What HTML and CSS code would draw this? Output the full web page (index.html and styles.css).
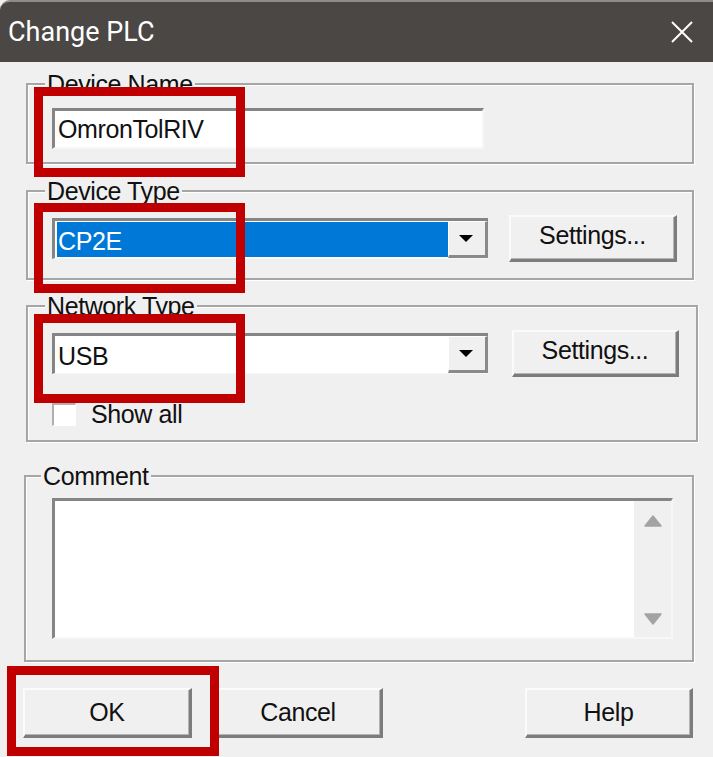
FILE: index.html
```html
<!DOCTYPE html>
<html>
<head>
<meta charset="utf-8">
<title>Change PLC</title>
<link rel="stylesheet" href="styles.css">
</head>
<body>
<div class="window">
  <div class="titlebar">
    <span class="title">Change PLC</span>
    <svg class="close" width="24" height="24" viewBox="0 0 24 24"><path d="M2 2 L22 22 M22 2 L2 22" stroke="#ffffff" stroke-width="2" fill="none"/></svg>
  </div>
  <div class="client">
    <div class="group g-name">
      <span class="legend">Device Name</span>
      <div class="edit name-edit"><span class="txt">OmronTolRIV</span></div>
    </div>

    <div class="group g-type">
      <span class="legend">Device Type</span>
      <div class="row">
        <div class="combo">
          <div class="combo-text selected">CP2E</div>
          <div class="drop"><svg width="14" height="8" viewBox="0 0 14 8"><path d="M0 0 H14 L7 7 Z" fill="#000"/></svg></div>
        </div>
        <div class="btn settings">Settings...</div>
      </div>
    </div>

    <div class="group g-net">
      <span class="legend">Network Type</span>
      <div class="row">
        <div class="combo">
          <div class="combo-text">USB</div>
          <div class="drop"><svg width="14" height="8" viewBox="0 0 14 8"><path d="M0 0 H14 L7 7 Z" fill="#000"/></svg></div>
        </div>
        <div class="btn settings settings2">Settings...</div>
      </div>
      <div class="check-row">
        <span class="checkbox"></span>
        <span class="check-label">Show all</span>
      </div>
    </div>

    <div class="group g-comment">
      <span class="legend legend-c">Comment</span>
      <div class="memo">
        <div class="memo-area"></div>
        <div class="scrollbar">
          <svg width="18" height="12" viewBox="0 0 18 12"><path d="M9 1 L17 11 H1 Z" fill="#a3a3a3" stroke="#a3a3a3" stroke-width="1.5" stroke-linejoin="round"/></svg>
          <svg width="18" height="12" viewBox="0 0 18 12"><path d="M1 1 H17 L9 11 Z" fill="#a3a3a3" stroke="#a3a3a3" stroke-width="1.5" stroke-linejoin="round"/></svg>
        </div>
      </div>
    </div>

    <div class="buttons">
      <div class="btn dlg-btn ok">OK</div>
      <div class="btn dlg-btn cancel">Cancel</div>
      <div class="btn dlg-btn help">Help</div>
    </div>
  </div>

  <div class="mark m1"></div>
  <div class="mark m2"></div>
  <div class="mark m3"></div>
  <div class="mark m4"></div>
</div>
</body>
</html>
```

FILE: styles.css
```css
html, body {
  margin: 0;
  padding: 0;
  background: #f0f0f0;
}

.window {
  position: relative;
  width: 713px;
  height: 757px;
  background: #f0f0f0;
  overflow: hidden;
  font-family: "Liberation Sans", Arial, sans-serif;
  font-size: 25px;
  letter-spacing: -0.4px;
  color: #111;
}

.titlebar {
  height: 62px;
  box-sizing: border-box;
  background: #4a4745;
  border-top: 2px solid #8e8c8a;
  border-top-left-radius: 10px;
  display: flex;
  align-items: center;
  justify-content: space-between;
  padding: 0 19px 0 8px;
}

.title {
  font-family: Roboto, "Noto Sans", sans-serif;
  font-size: 27px;
  letter-spacing: 0;
  color: #ffffff;
  margin-top: -1px;
}

.close {
  display: block;
}

.client {
  display: flex;
  flex-direction: column;
  padding: 21px 0 0 26px;
}

.group {
  position: relative;
  box-sizing: border-box;
  border: 2px solid #a6a6a6;
  box-shadow: inset 1px 1px 0 #ffffff, 1px 1px 0 #ffffff;
}

.legend {
  position: absolute;
  top: -13px;
  left: 17px;
  padding: 0 2px;
  line-height: 24px;
  background: #f0f0f0;
  white-space: nowrap;
}

.legend-c {
  left: 15px;
}

.g-name {
  width: 668px;
  height: 81px;
  padding: 23px 0 0 24px;
}

.g-type {
  width: 668px;
  height: 90px;
  margin-top: 26px;
  padding: 23px 0 0 24px;
}

.g-net {
  width: 672px;
  height: 137px;
  margin-top: 25px;
  padding: 23px 0 0 24px;
}

.g-comment {
  width: 670px;
  height: 187px;
  margin-top: 33px;
  margin-left: -2px;
  padding: 21px 0 0 26px;
}

.edit {
  box-sizing: border-box;
  background: #ffffff;
  border-style: solid;
  border-width: 3px 2px 2px 3px;
  border-color: #858585 #f7f7f7 #f7f7f7 #858585;
  display: flex;
  align-items: center;
}

.name-edit {
  width: 432px;
  height: 41px;
  padding-left: 3px;
}

.row {
  display: flex;
  align-items: center;
}

.combo {
  box-sizing: border-box;
  width: 436px;
  height: 41px;
  background: #ffffff;
  border-style: solid;
  border-width: 3px 0 1px 3px;
  border-color: #858585 #f7f7f7 #f7f7f7 #858585;
  display: flex;
}

.combo-text {
  flex: 1;
  margin: 1px 0 1px 2px;
  padding-left: 1px;
  display: flex;
  align-items: center;
  padding-top: 3px;
}

.combo-text.selected {
  background: #0078d7;
  color: #ffffff;
}

.drop {
  box-sizing: border-box;
  width: 40px;
  background: #f0f0f0;
  border-style: solid;
  border-width: 1px 3px 3px 1px;
  border-color: #ffffff #8a8a8a #8a8a8a #ffffff;
  display: flex;
  align-items: center;
  justify-content: center;
  padding-right: 2px;
}

.drop svg {
  display: block;
}

.btn {
  box-sizing: border-box;
  background: #f0f0f0;
  border-style: solid;
  border-width: 2px 3px 3px 2px;
  border-color: #fbfbfb #7c7c7c #7c7c7c #fbfbfb;
  box-shadow: inset -1px -1px 0 #b4b4b4;
  display: flex;
  align-items: center;
  justify-content: center;
}

.settings {
  width: 168px;
  height: 47px;
  margin-left: 21px;
  padding-bottom: 6px;
}

.settings2 {
  width: 167px;
  margin-left: 24px;
}

.check-row {
  display: flex;
  align-items: center;
  margin-top: 25px;
}

.checkbox {
  box-sizing: border-box;
  width: 24px;
  height: 23px;
  background: #ffffff;
  border-style: solid;
  border-width: 2px 1px 1px 2px;
  border-color: #b0b0b0 #ffffff #ffffff #b0b0b0;
}

.check-label {
  margin-left: 15px;
  line-height: 24px;
}

.memo {
  box-sizing: border-box;
  width: 621px;
  height: 141px;
  background: #ffffff;
  border-style: solid;
  border-width: 3px 2px 2px 3px;
  border-color: #858585 #f7f7f7 #f7f7f7 #858585;
  display: flex;
}

.memo-area {
  flex: 1;
}

.scrollbar {
  width: 37px;
  background: #f0f0f0;
  display: flex;
  flex-direction: column;
  align-items: center;
  justify-content: space-between;
  padding: 14px 0 12px;
  box-sizing: border-box;
}

.scrollbar svg {
  display: block;
}

.buttons {
  display: flex;
  margin-top: 26px;
  margin-left: -3px;
}

.dlg-btn {
  width: 169px;
  height: 50px;
}

.cancel {
  margin-left: 22px;
}

.help {
  width: 168px;
  margin-left: 142px;
}

.mark {
  position: absolute;
  box-sizing: border-box;
  border: 9px solid #c00000;
}

.m1 { left: 34px; top: 87px; width: 211px; height: 90px; }
.m2 { left: 34px; top: 203px; width: 211px; height: 90px; }
.m3 { left: 34px; top: 314px; width: 211px; height: 89px; }
.m4 { left: 7px; top: 666px; width: 212px; height: 90px; }
```
